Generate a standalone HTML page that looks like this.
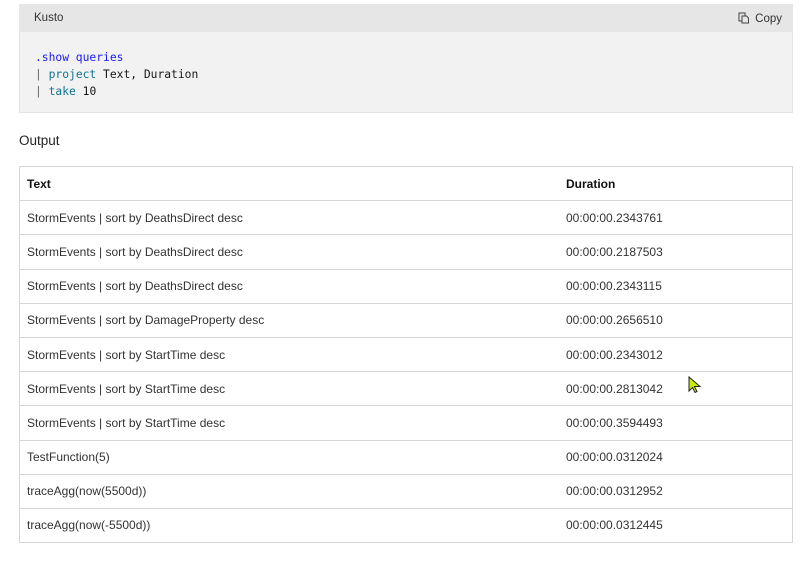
<!DOCTYPE html>
<html><head><style>
body{margin:0;background:#fff;width:812px;height:561px;overflow:hidden;font-family:"Liberation Sans",sans-serif;color:#171717;position:relative}
.hdr{position:absolute;left:19px;top:4px;width:774px;height:28px;background:#e6e6e6;font-size:11.5px}
.hdr .l{position:absolute;left:15px;top:8px;color:#333}
.hdr .r{position:absolute;right:11px;top:8px;color:#333}
.code{position:absolute;left:19px;top:32px;width:772px;height:80px;background:#f2f2f2;border:1px solid #e3e3e3;border-top:none}
pre{margin:0;position:absolute;left:15px;top:17px;font-family:"DejaVu Sans Mono","Liberation Mono",monospace;font-size:11.3px;line-height:17px;color:#171717}
.b{color:#1a1af0}.t{color:#0e7490}.p{color:#666}
.out{position:absolute;left:19px;top:133px;font-size:13.5px;color:#222}
table{position:absolute;left:19px;top:166px;width:774px;border-collapse:collapse;font-size:12px}
td,th{border:1px solid #d6d6d6;border-left:none;border-right:none;height:33.2px;padding:0 0 0 7px;text-align:left}
table{border:1px solid #d6d6d6}
th{font-weight:bold;color:#111}
td{color:#333}
.c2{width:226px}
</style></head><body>
<div class="hdr"><span class="l">Kusto</span><span class="r"><svg width="12" height="12" viewBox="0 0 12 12" style="vertical-align:-2px;margin-right:5px"><rect x="1" y="1" width="6" height="8" fill="none" stroke="#444"/><path d="M4 4h4.5l2 2v5H4z" fill="#e6e6e6" stroke="#444"/></svg>Copy</span></div>
<div class="code"><pre><span class="b">.show queries</span>
<span class="p">|</span> <span class="t">project</span> Text, Duration
<span class="p">|</span> <span class="t">take</span> 10</pre></div>
<div class="out">Output</div>
<table>
<tr><th>Text</th><th class="c2">Duration</th></tr>
<tr><td>StormEvents | sort by DeathsDirect desc</td><td>00:00:00.2343761</td></tr>
<tr><td>StormEvents | sort by DeathsDirect desc</td><td>00:00:00.2187503</td></tr>
<tr><td>StormEvents | sort by DeathsDirect desc</td><td>00:00:00.2343115</td></tr>
<tr><td>StormEvents | sort by DamageProperty desc</td><td>00:00:00.2656510</td></tr>
<tr><td>StormEvents | sort by StartTime desc</td><td>00:00:00.2343012</td></tr>
<tr><td>StormEvents | sort by StartTime desc</td><td>00:00:00.2813042</td></tr>
<tr><td>StormEvents | sort by StartTime desc</td><td>00:00:00.3594493</td></tr>
<tr><td>TestFunction(5)</td><td>00:00:00.0312024</td></tr>
<tr><td>traceAgg(now(5500d))</td><td>00:00:00.0312952</td></tr>
<tr><td>traceAgg(now(-5500d))</td><td>00:00:00.0312445</td></tr>
</table>
<svg style="position:absolute;left:688px;top:376px" width="14" height="18" viewBox="0 0 14 18"><path d="M1 1v14l3.5-3.5 2.5 5 2-1-2.5-5H12z" fill="#c8f000" stroke="#222" stroke-width="1"/></svg>
</body></html>
